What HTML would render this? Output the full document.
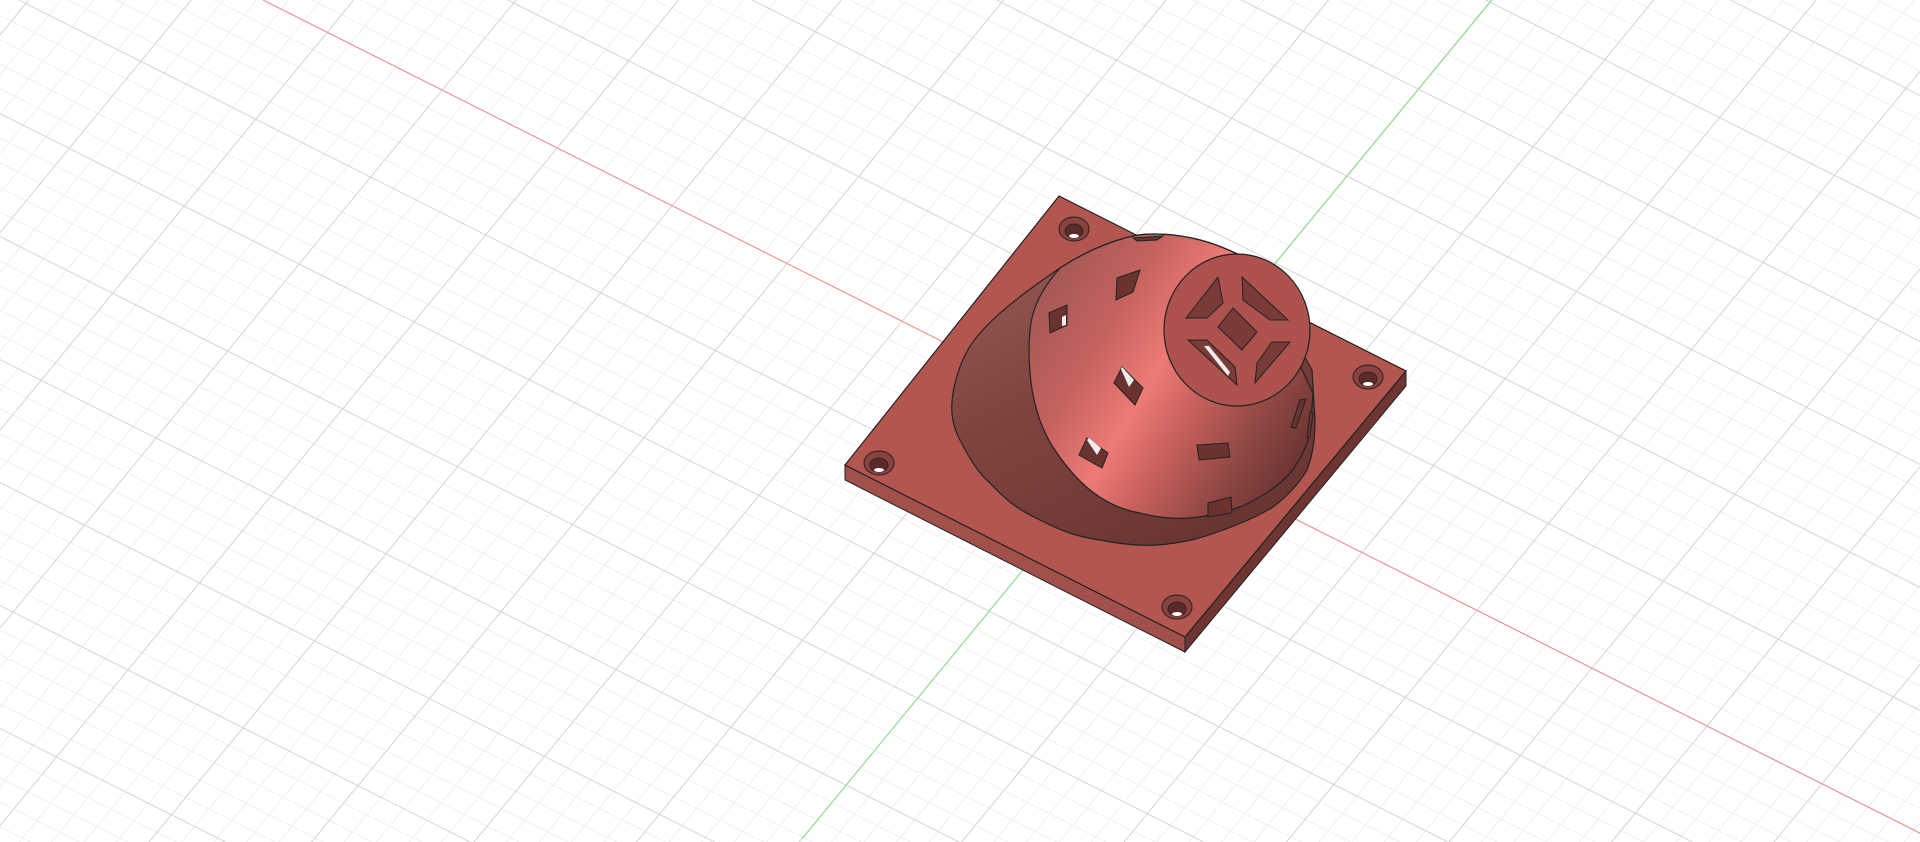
<!DOCTYPE html>
<html><head><meta charset="utf-8"><style>
html,body{margin:0;padding:0;background:#fff;width:1920px;height:842px;overflow:hidden}
svg{display:block;position:absolute;left:0;top:0}
</style></head><body>
<svg id="grid" width="1920" height="842" viewBox="0 0 1920 842" xmlns="http://www.w3.org/2000/svg"></svg>
<svg width="1920" height="842" viewBox="0 0 1920 842" xmlns="http://www.w3.org/2000/svg">
<defs>
<linearGradient id="cone" x1="0" y1="0.1" x2="1" y2="0.7">
<stop offset="0" stop-color="#9a5552"/><stop offset="0.3" stop-color="#c4625e"/><stop offset="0.5" stop-color="#ee7a76"/><stop offset="0.65" stop-color="#c8605c"/><stop offset="0.85" stop-color="#8e4744"/><stop offset="1" stop-color="#6e3634"/></linearGradient>
<linearGradient id="outer" x1="0" y1="0" x2="0.6" y2="1">
<stop offset="0" stop-color="#9a5d58"/><stop offset="0.5" stop-color="#80443f"/><stop offset="1" stop-color="#6a3634"/></linearGradient>
</defs>
<!-- plate -->
<polygon points="845,465 1185,637 1185,652 845,480" fill="#a2504b" stroke="#222" stroke-width="1"/>
<polygon points="1185,637 1406,371 1406,386 1185,652" fill="#6e3532" stroke="#222" stroke-width="1"/>
<polygon points="845,465 1059,196 1406,371 1185,637" fill="#b3564f" stroke="#222" stroke-width="1.2"/>
<g fill="#8a423e" stroke="#222" stroke-width="1">
<ellipse cx="1074" cy="229" rx="15" ry="12"/><ellipse cx="1368" cy="377" rx="15" ry="12"/>
<ellipse cx="879" cy="463" rx="15" ry="12"/><ellipse cx="1177" cy="607" rx="15" ry="12"/>
</g>
<g fill="#5a2a28" stroke="#222" stroke-width="0.8">
<ellipse cx="1074" cy="231" rx="9" ry="7"/><ellipse cx="1368" cy="379" rx="9" ry="7"/>
<ellipse cx="879" cy="465" rx="9" ry="7"/><ellipse cx="1177" cy="609" rx="9" ry="7"/>
</g>
<g fill="#fff"><ellipse cx="1074" cy="236" rx="5" ry="2"/><ellipse cx="1368" cy="384" rx="5" ry="2"/><ellipse cx="879" cy="470" rx="5" ry="2"/><ellipse cx="1177" cy="614" rx="5" ry="2"/></g>

<!-- cone outer -->
<path d="M1060,268 C1035,285 1000,310 983,330 C968,345 958,365 953,393 C950,410 952,425 960,440 C970,460 980,475 990,483 C1010,505 1025,513 1040,520 C1065,533 1080,537 1100,540 C1120,544 1140,546 1157,545 C1185,543 1205,537 1223,530 C1245,522 1260,515 1273,507 C1290,494 1300,482 1307,470 C1313,455 1315,438 1315,420 L1312,370 L1250,260 C1220,245 1200,238 1173,235 C1150,233 1140,234 1125,238 C1100,245 1080,255 1060,268 Z" fill="url(#outer)" stroke="#222" stroke-width="1.2"/>
<!-- cone inner -->
<path d="M1060,268 C1045,285 1032,305 1030,330 C1028,350 1029,375 1033,395 C1038,420 1046,438 1057,453 C1067,468 1078,480 1090,490 C1105,502 1122,510 1140,513 C1158,518 1175,519 1190,518 C1210,516 1226,512 1240,507 C1260,498 1278,487 1290,473 C1302,458 1307,445 1310,433 L1313,393 L1250,260 C1220,245 1200,238 1173,235 C1150,233 1140,234 1125,238 C1100,245 1080,255 1060,268 Z" fill="url(#cone)" stroke="#222" stroke-width="1.2"/>
<!-- top face -->
<ellipse cx="1237" cy="330" rx="73" ry="76" fill="#ad524d" stroke="#222" stroke-width="1.2"/>
<g fill="#7a3a37" stroke="#222" stroke-width="1">
<polygon points="1218,327 1233,308 1257,332 1242,350"/>
<polygon points="1186,318 1218,277 1223,303 1207,318"/>
<polygon points="1242,277 1288,320 1270,320 1243,300"/>
<polygon points="1188,340 1207,340 1235,367 1237,385"/>
<polygon points="1255,383 1257,363 1272,342 1290,342"/>
</g>
<polygon points="1204,346 1209,346 1230,372 1228,376" fill="#eee"/>
<!-- side slots -->
<g fill="#6a3330" stroke="#222" stroke-width="1">
<polygon points="1117,278 1140,270 1133,292 1116,300"/>
<polygon points="1049,313 1067,305 1067,325 1050,333"/>
<polygon points="1114,383 1122,367 1143,388 1135,405"/>
<polygon points="1079,455 1087,438 1108,453 1102,468"/>
<polygon points="1197,445 1228,443 1230,457 1199,460"/>
<polygon points="1208,503 1231,497 1232,513 1208,517"/>
<polygon points="1133,238 1163,236 1157,240 1137,241"/>
<polygon points="1300,400 1306,399 1296,428 1291,427"/>
<polygon points="1310,412 1313,413 1310,437 1307,438"/>
</g>
<g fill="#eee"><polygon points="1121,369 1122,367 1134,380 1129,387"/><polygon points="1087,440 1089,438 1101,448 1097,455"/><polygon points="1062,317 1066,315 1066,325 1062,326"/></g>
</svg>
<script>
(function(){
var s=document.getElementById('grid'),h='';
function L(x1,y1,x2,y2,c,w){h+='<line x1="'+x1.toFixed(1)+'" y1="'+y1.toFixed(1)+'" x2="'+x2.toFixed(1)+'" y2="'+y2.toFixed(1)+'" stroke="'+c+'" stroke-width="'+w+'"/>';}
var ox=1132,oy=437,m=0.503,g=-0.822;
var minor='#f0f0f0',major='#d4d4d4';
for(var pass=0;pass<2;pass++){
for(var k=-45;k<=50;k++){
 var isMaj=(k%5===0);
 if((pass===0)===isMaj)continue;
 var dy=k*24.6;
 L(0,oy+m*(0-ox)+dy,1920,oy+m*(1920-ox)+dy,isMaj?major:minor,1);
}
for(var k=-60;k<=45;k++){
 var isMaj=(k%5===0);
 if((pass===0)===isMaj)continue;
 var dx=k*32.5;
 L(ox+g*(0-oy)+dx,0,ox+g*(842-oy)+dx,842,isMaj?major:minor,1);
}
}
L(263,0,1920,833,'#f28a8a',1);
L(1492,0,802,839,'#8fe08f',1);
s.innerHTML=h;
})();
</script>
</body></html>
